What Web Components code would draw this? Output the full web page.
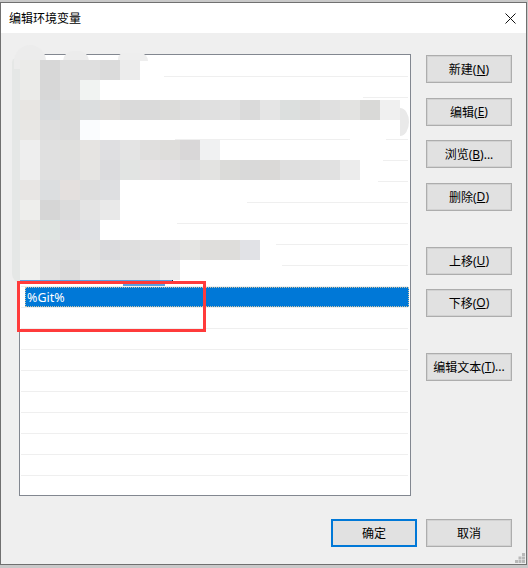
<!DOCTYPE html>
<html lang="zh">
<head>
<meta charset="utf-8">
<title>编辑环境变量</title>
<style>
  html, body { margin: 0; padding: 0; height: 100%; overflow: hidden; background: #c9c9c9; }
  body { padding-top: 2px; box-sizing: border-box; font: 12px "Noto Sans", "Noto Sans CJK SC", sans-serif; }
  .group { display: flex; flex-direction: column; gap: 14.67px; }
  .pair { display: flex; flex-direction: column; gap: 14px; margin-top: 36px; }
  .single { display: flex; margin-top: 36px; }
</style>
</head>
<body>
<x-dialog>
  <span slot="title">编辑环境变量</span>
  <x-list slot="list"></x-list>
  <x-mosaic slot="overlay"></x-mosaic>
  <x-callout slot="overlay"></x-callout>
  <div slot="side" class="group">
    <x-button>新建(<u>N</u>)</x-button>
    <x-button>编辑(<u>E</u>)</x-button>
    <x-button>浏览(<u>B</u>)...</x-button>
    <x-button>删除(<u>D</u>)</x-button>
  </div>
  <div slot="side" class="pair">
    <x-button>上移(<u>U</u>)</x-button>
    <x-button>下移(<u>O</u>)</x-button>
  </div>
  <div slot="side" class="single">
    <x-button>编辑文本(<u>T</u>)...</x-button>
  </div>
  <x-button slot="footer" default>确定</x-button>
  <x-button slot="footer">取消</x-button>
</x-dialog>

<script>
class XDialog extends HTMLElement {
  constructor() {
    super();
    this.attachShadow({ mode: "open" });
    this.shadowRoot.innerHTML = `
      <style>
        :host {
          display: flex;
          flex-direction: column;
          position: relative;
          box-sizing: border-box;
          width: 527px;
          height: 563px;
          background: #efefef;
          border: 1px solid #707070;
          color: #000;
        }
        .titlebar {
          display: flex;
          align-items: center;
          justify-content: space-between;
          height: 30px;
          padding: 0 10px 0 8px;
          background: #fff;
          flex: none;
        }
        .body {
          display: flex;
          gap: 15px;
          padding: 21px 0 0 18px;
        }
        .side {
          display: flex;
          flex-direction: column;
          padding-top: 1px;
        }
        .footer {
          display: flex;
          justify-content: flex-end;
          gap: 9px;
          margin-top: 23px;
          padding-right: 14px;
        }
        .grip {
          position: absolute;
          right: 1px;
          bottom: 1px;
        }
        svg { display: block; }
      </style>
      <div class="titlebar">
        <slot name="title"></slot>
        <svg width="11" height="11" viewBox="0 0 11 11" fill="none" stroke="#111" stroke-width="1">
          <path d="M.5.5l10 10M10.5.5l-10 10"/>
        </svg>
      </div>
      <div class="body">
        <slot name="list"></slot>
        <div class="side"><slot name="side"></slot></div>
      </div>
      <div class="footer"><slot name="footer"></slot></div>
      <slot name="overlay"></slot>
      <svg class="grip" width="10" height="10" viewBox="0 0 10 10" fill="#b9b9b9">
        <path d="M7 0h3v3H7zM3.500 3.500h3v3h-3zM7 3.500h3v3H7zM0 7h3v3H0zM3.500 7h3v3h-3zM7 7h3v3H7z"/>
      </svg>`;
  }
}

class XButton extends HTMLElement {
  constructor() {
    super();
    this.attachShadow({ mode: "open" });
    this.shadowRoot.innerHTML = `
      <style>
        :host {
          display: flex;
          align-items: center;
          justify-content: center;
          box-sizing: border-box;
          width: 86px;
          height: 28px;
          background: #e1e1e1;
          border: 1px solid #adadad;
          box-shadow: inset 0 0 0 1px #d2d2d2;
          white-space: nowrap;
          font-size: 12px;
        }
        :host([default]) {
          border: 2px solid #0078d7;
          box-shadow: none;
        }
      </style>
      <slot></slot>`;
  }
}

class XList extends HTMLElement {
  constructor() {
    super();
    this.attachShadow({ mode: "open" });
    // x where the row's bottom line shows again, the smear wipes it before that
    const lineFrom = [164, 363, 400, 175, 383, 378, 247, 177, 276, 282];
    let rows = "";
    for (let i = 0; i < 20; i++) {
      const from = i < lineFrom.length ? lineFrom[i] - 20 : 1;
      const first = i === 0 ? " first" : "";
      const selected = i === 11 ? `<div class="sel">%Git%</div>` : "";
      rows += `<div class="row${first}">${selected}<i style="margin-left:${from}px"></i></div>`;
    }
    this.shadowRoot.innerHTML = `
      <style>
        :host {
          display: block;
          box-sizing: border-box;
          width: 392px;
          height: 442px;
          background: #fff;
          border: 1px solid #828790;
          flex: none;
        }
        .row {
          display: flex;
          flex-direction: column;
          justify-content: flex-end;
          height: 21px;
        }
        .row.first { height: 22px; }
        .row i {
          display: block;
          height: 1px;
          margin-right: 2px;
          background: #efefef;
        }
        .sel {
          box-sizing: border-box;
          height: 20px;
          margin-left: 5px;
          margin-right: 1px;
          padding-left: 1px;
          line-height: 20px;
          color: #fff;
          background: #0078d7;
          border: 1px dotted #c8c4a8;
          font-size: 12.5px;
        }
      </style>
      ${rows}`;
  }
}

class XMosaic extends HTMLElement {
  constructor() {
    super();
    this.attachShadow({ mode: "open" });
    const data = [
      "ebebe9 d7d7d7 dfdfdf dfdfdf dbdbdb ececec",
      "ebebe9 d7d7d7 dfdfdf f1f3f2",
      "e8e6e3 d8dadc dcdcda dcdedf e0dedc dadada dadada dcdcda dedede e0e0e0 e1e1e1 dadada e5e5e5 dcdfde dcdcdb e0e0e0 e3e3e1 d9d9d7 f0f0f0",
      "e8e7e4 dedede dcdcdc fafcfe",
      "eeeeee e0e0e0 e0e0de e6e4e2 dfdfe1 e4e4e4 e0dfde dedddb d9d7d8 f0f1f2",
      "eeeeee e0e0e0 dfdfdf e6e5e3 dcdcde e2e4e3 e5e3e3 e3e1e3 dfdfdf e3e3e1 dbdbd9 d9d9d9 dad9d7 dfdfdf e0e0e0 e1e1e1 ececec",
      "e8e6e4 dcdee0 e4e0de dedede dedfe1",
      "eeeeec d6d6d6 dcdcdc e4e4e4 e9e9e9",
      "e7e5e2 e0e4e2 dfdde0 e0e2e5",
      "ededeb e0e0e0 e1e1e1 e3e3e1 dcdcde dfdfdf e1e1e1 e1e0e1 e5e5e3 dfdedc dedddb e1e2e6",
      "f0f0ee e2e2e2 dcdcdc e6e6e6 e3e3e3 e3e3e3 e4e4e4 ececec"
    ];
    const rows = data.map((row) => {
      const cells = row.split(" ").map((c) => `<b style="background:#${c}"></b>`).join("");
      return `<div class="r">${cells}</div>`;
    }).join("");
    this.shadowRoot.innerHTML = `
      <style>
        :host {
          position: absolute;
          left: 0;
          top: 0;
          width: 100%;
          height: 100%;
          pointer-events: none;
        }
        .grid {
          position: absolute;
          left: 19px;
          top: 57px;
        }
        .r { display: flex; height: 20px; }
        .r b { display: block; width: 20px; height: 20px; flex: none; }
        .edge {
          position: absolute;
          left: 11px;
          top: 55px;
          width: 9px;
          height: 225px;
          background: #e5e7e6;
          border-radius: 5px 0 0 10px;
        }
        .bump { position: absolute; background: #ececec; }
        .b1 { left: 13px; top: 42px; width: 32px; height: 24px; border-radius: 16px 16px 0 0; }
        .b2 { left: 62px; top: 48px; width: 26px; height: 10px; border-radius: 13px 13px 0 0; }
        .b3 { left: 117px; top: 50px; width: 30px; height: 8px; border-radius: 10px 14px 0 0; background: #eeeeee; }
        .wipe { position: absolute; background: #fff; }
        .w1 { left: 349px; top: 135px; width: 36px; height: 3px; }
        .blob {
          position: absolute;
          left: 399px;
          top: 105px;
          width: 9px;
          height: 28px;
          background: #e9e9e9;
          border-radius: 0 9px 9px 0 / 0 14px 14px 0;
        }
        .under {
          position: absolute;
          left: 19px;
          top: 277px;
          width: 152px;
          height: 1px;
          background: #5c9fe0;
          border-right: 1px solid #123;
        }
        .under2 {
          position: absolute;
          left: 122px;
          top: 281px;
          width: 42px;
          height: 2px;
          background: #5c9fe0;
        }
      </style>
      <div class="edge"></div>
      <div class="bump b1"></div>
      <div class="bump b2"></div>
      <div class="bump b3"></div>
      <div class="wipe w1"></div>
      <div class="blob"></div>
      <div class="under"></div>
      <div class="under2"></div>
      <div class="grid">${rows}</div>`;
  }
}

class XCallout extends HTMLElement {
  constructor() {
    super();
    this.attachShadow({ mode: "open" });
    this.shadowRoot.innerHTML = `
      <style>
        :host {
          position: absolute;
          left: 16px;
          top: 278px;
          box-sizing: border-box;
          width: 189px;
          height: 51px;
          border: 3px solid #ff3b3b;
        }
      </style>`;
  }
}

customElements.define("x-dialog", XDialog);
customElements.define("x-button", XButton);
customElements.define("x-list", XList);
customElements.define("x-mosaic", XMosaic);
customElements.define("x-callout", XCallout);
</script>
</body>
</html>
